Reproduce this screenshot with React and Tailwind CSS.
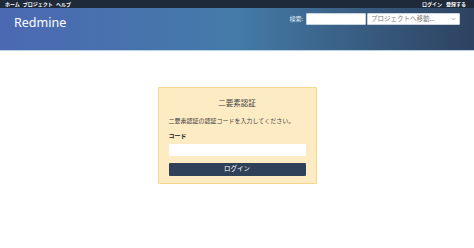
export default function App() {
  return (
    <div className="w-[474px] h-[248px] bg-white overflow-hidden font-['Noto_Sans','Noto_Sans_CJK_JP',sans-serif]">
      <div className="h-[8px] bg-[#1e2a3a] flex items-center justify-between px-[5px] text-white font-bold text-[5px] leading-none">
        <div className="flex gap-[3px]">
          <span>ホーム</span>
          <span>プロジェクト</span>
          <span>ヘルプ</span>
        </div>
        <div className="flex gap-[4px] pr-[3px]">
          <span>ログイン</span>
          <span>登録する</span>
        </div>
      </div>
      <div className="h-[43px] bg-gradient-to-r from-[#4b68b3] via-[#447ba8] to-[#2d4260] border-b border-[#b8d2e6] flex justify-between items-start">
        <div className="pl-[14px] pt-[9px] text-white text-[12.5px] leading-none font-['Noto_Sans',sans-serif]">Redmine</div>
        <div className="flex items-center pt-[5px] pr-[14px]">
          <span className="text-[#e6eef7] text-[6px] mr-[3px]">検索:</span>
          <div className="w-[60px] h-[12px] bg-white rounded-[1px] border border-[#c9d3dd]"></div>
          <div className="ml-[1px] w-[93px] h-[12px] bg-white rounded-[1px] border border-[#c9d3dd] flex items-center justify-between px-[3px]">
            <span className="text-[#7a7a7a] text-[6.5px] leading-none">プロジェクトへ移動...</span>
            <svg width="5" height="4" viewBox="0 0 5 4"><path d="M0.5 1 L2.5 3 L4.5 1" stroke="#999" strokeWidth="0.7" fill="none" /></svg>
          </div>
        </div>
      </div>
      <div className="flex justify-center pt-[36px]">
        <div className="w-[159px] h-[97px] bg-[#fdebc3] border border-[#f5d88e] rounded-[1px] px-[10px] pt-[12px] flex flex-col">
          <div className="text-center text-[7.5px] leading-none text-[#444]">二要素認証</div>
          <div className="mt-[10px] text-[6px] leading-none text-[#444] whitespace-nowrap">二要素認証の認証コードを入力してください。</div>
          <div className="mt-[9px] text-[6px] leading-none font-bold text-[#222]">コード</div>
          <div className="mt-[5px] h-[12px] bg-white rounded-[1px]"></div>
          <div className="mt-[7px] h-[13px] bg-[#2f4158] rounded-[1px] flex items-center justify-center text-white text-[6.5px] leading-none">ログイン</div>
        </div>
      </div>
    </div>
  );
}
